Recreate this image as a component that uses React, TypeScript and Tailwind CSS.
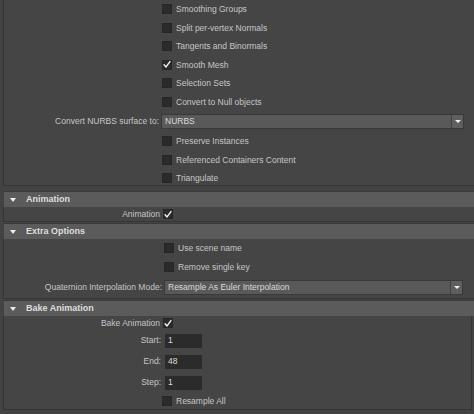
import React from 'react';

const FONT = "font-['Liberation_Sans','Arial',sans-serif]";

// 勾选框
function Box({ checked = false }: { checked?: boolean }) {
  return (
    <span className="flex h-[10px] w-[10px] shrink-0 items-center justify-center border border-[#262626] bg-[#2b2b2b]">
      {checked && (
        <svg width="9" height="9" viewBox="0 0 9 9">
          <path d="M1.2 4.8 L3.4 7.2 L7.8 1.2" fill="none" stroke="#f2f2f2" strokeWidth="1.6" strokeLinecap="round" strokeLinejoin="round" />
        </svg>
      )}
    </span>
  );
}

function CheckRow({ label, checked, col = 157, h = 'h-[18.5px]' }: { label: string; checked?: boolean; col?: number; h?: string }) {
  return (
    <div className={`flex items-center ${h}`}>
      <div style={{ width: col }} className="shrink-0" />
      <div className="ml-[2px] flex items-center gap-[4px]">
        <Box checked={checked} />
        <span>{label}</span>
      </div>
    </div>
  );
}

function LabelCheck({ label, h }: { label: string; h: string }) {
  return (
    <div className={`flex items-center ${h}`}>
      <div className="w-[156px] shrink-0 text-right">{label}</div>
      <div className="ml-[3px]">
        <Box checked />
      </div>
    </div>
  );
}

function Dropdown({ label, value, col, width, h }: { label: string; value: string; col: number; width: number; h: string }) {
  return (
    <div className={`flex items-center ${h}`}>
      <div style={{ width: col }} className="shrink-0 text-right">{label}</div>
      <div style={{ width }} className="ml-[2px] flex h-[15px] items-stretch border border-[#393939] bg-[#595959] text-[#dadada]">
        <span className="flex flex-1 items-center pl-[3px]">{value}</span>
        <span className="flex w-[12px] items-center justify-center border-l border-[#404040] bg-[#5f5f5f]">
          <span className="h-0 w-0 border-x-[3px] border-t-[3px] border-x-transparent border-t-[#f0f0f0]" />
        </span>
      </div>
    </div>
  );
}

function Field({ label, value, h }: { label: string; value: string; h: string }) {
  return (
    <div className={`flex items-center ${h}`}>
      <div className="w-[157px] shrink-0 text-right">{label}</div>
      <div className="ml-[4px] flex h-[14px] w-[37px] items-center bg-[#2b2b2b] pl-[3px] text-[#dedede]">{value}</div>
    </div>
  );
}

function Header({ title }: { title: string }) {
  return (
    <div className="ml-[4px] flex h-[16px] items-center border-t border-[#3a3a3a] bg-[#5b5b5b] text-[9px] font-bold text-[#dedede]">
      <span className="ml-[6px] h-0 w-0 border-x-[3px] border-t-[4px] border-x-transparent border-t-[#eeeeee]" />
      <span className="ml-[10px]">{title}</span>
    </div>
  );
}

export default function App() {
  return (
    <div className={`h-[414px] w-[474px] overflow-hidden bg-[#434343] text-[8.5px] leading-none text-[#c6c6c6] ${FONT}`}>
      {/* 上一节的剩余部分 */}
      <div className="ml-[3px] h-[186px] overflow-hidden border-b border-l border-[#353535] bg-[#454545]">
        <CheckRow label="Smoothing Groups" col={156} />
        <CheckRow label="Split per-vertex Normals" col={156} />
        <CheckRow label="Tangents and Binormals" col={156} />
        <CheckRow label="Smooth Mesh" checked col={156} />
        <CheckRow label="Selection Sets" col={156} />
        <CheckRow label="Convert to Null objects" col={156} />
        <Dropdown label="Convert NURBS surface to:" value="NURBS" col={155} width={303} h="h-[21px]" />
        <CheckRow label="Preserve Instances" col={156} />
        <CheckRow label="Referenced Containers Content" col={156} />
        <CheckRow label="Triangulate" col={156} />
      </div>

      {/* Animation */}
      <div className="mt-[5px]">
        <Header title="Animation" />
        <div className="ml-[3px] h-[15px] border-b border-l border-[#353535] bg-[#454545]">
          <LabelCheck label="Animation" h="h-[14px]" />
        </div>
      </div>

      {/* Extra Options */}
      <div className="mt-[1px]">
        <Header title="Extra Options" />
        <div className="ml-[3px] h-[60px] border-b border-l border-[#353535] bg-[#454545]">
          <CheckRow label="Use scene name" col={158} />
          <CheckRow label="Remove single key" col={158} />
          <Dropdown label="Quaternion Interpolation Mode:" value="Resample As Euler Interpolation" col={158} width={299} h="h-[22px]" />
        </div>
      </div>

      {/* Bake Animation */}
      <div className="mt-[1px]">
        <Header title="Bake Animation" />
        <div className="ml-[3px] mr-[2px] h-[94px] border-b border-l border-r border-[#353535] bg-[#454545]">
          <LabelCheck label="Bake Animation" h="h-[14px]" />
          <Field label="Start:" value="1" h="h-[21px]" />
          <Field label="End:" value="48" h="h-[21px]" />
          <Field label="Step:" value="1" h="h-[21px]" />
          <CheckRow label="Resample All" col={156} h="h-[16px]" />
        </div>
      </div>
    </div>
  );
}
